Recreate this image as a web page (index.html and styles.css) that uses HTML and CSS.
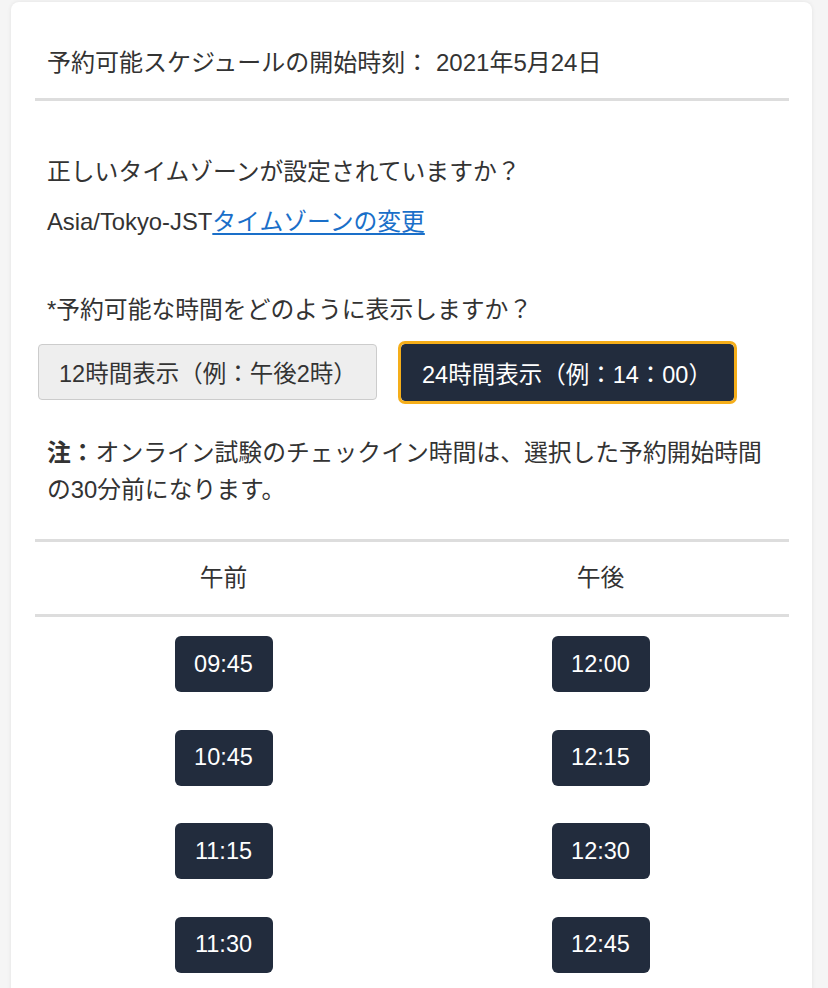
FILE: index.html
```html
<!DOCTYPE html>
<html lang="ja">
<head>
  <meta charset="UTF-8">
  <title>予約可能スケジュール</title>
  <link rel="stylesheet" href="styles.css">
</head>
<body>
  <div class="card">
    <div class="header">
      <p>予約可能スケジュールの開始時刻： 2021年5月24日</p>
    </div>

    <!-- タイムゾーン -->
    <div class="section">
      <p class="question">正しいタイムゾーンが設定されていますか？</p>
      <p class="tz">Asia/Tokyo-JST<a href="#">タイムゾーンの変更</a></p>
    </div>

    <!-- 時間表示 -->
    <div class="section format">
      <p class="question">*予約可能な時間をどのように表示しますか？</p>
      <div class="toggle">
        <button class="fmt">12時間表示（例：午後2時）</button>
        <button class="fmt active">24時間表示（例：14：00）</button>
      </div>
      <p class="note"><b>注：</b>オンライン試験のチェックイン時間は、選択した予約開始時間の30分前になります。</p>
    </div>

    <!-- 時間一覧 -->
    <div class="slots">
      <div class="slots-head">
        <div>午前</div>
        <div>午後</div>
      </div>
      <div class="slots-body">
        <div class="col">
          <button class="slot">09:45</button>
          <button class="slot">10:45</button>
          <button class="slot">11:15</button>
          <button class="slot">11:30</button>
        </div>
        <div class="col">
          <button class="slot">12:00</button>
          <button class="slot">12:15</button>
          <button class="slot">12:30</button>
          <button class="slot">12:45</button>
        </div>
      </div>
    </div>
  </div>
</body>
</html>
```

FILE: styles.css
```css
html, body {
  margin: 0;
  padding: 0;
  background-color: #f5f5f5;
  color: #333;
  font-family: "Liberation Sans", "Noto Sans CJK JP", sans-serif;
  font-size: 23.8px;
}

p {
  margin: 0;
}

.card {
  margin: 2px 16px 0 11px;
  padding: 0 23px 0 24px;
  background: #fff;
  border-radius: 8px;
  box-shadow: 0 0 4px rgba(0, 0, 0, 0.08);
  min-height: 1000px;
}

.header {
  padding: 43px 0 17px 12px;
  border-bottom: 3px solid #ddd;
  line-height: 36px;
  font-size: 24px;
}

.section {
  padding: 0 20px 0 12px;
  line-height: 36px;
}

.section .question {
  margin-top: 53px;
}

.tz {
  margin-top: 14px;
}

.tz a {
  color: #1a6fc9;
  text-decoration: underline;
  text-decoration-thickness: 2px;
  text-underline-offset: 3px;
}

.format .question {
  margin-top: 52px;
}

.toggle {
  display: flex;
  gap: 24px;
  margin: 16px 0 0 -9px;
}

.fmt {
  height: 56px;
  padding: 0 20px;
  font-family: inherit;
  font-size: 23.5px;
  text-align: left;
  border-radius: 4px;
  border: 1px solid #ccc;
  background-color: #eee;
  color: #333;
  cursor: pointer;
}

.fmt:first-child {
  width: 339px;
}

.fmt.active {
  width: 333px;
  height: 57px;
  border: 1px solid #222c3d;
  background-color: #222c3d;
  color: #fff;
  outline: 3px solid #f5ae1a;
  outline-offset: 0;
}

.note {
  margin-top: 33px;
  line-height: 37px;
}

.note b {
  margin-right: 1px;
}

.slots {
  margin-top: 31px;
  border-top: 3px solid #ddd;
}

.slots-head {
  display: grid;
  grid-template-columns: 1fr 1fr;
  text-align: center;
  line-height: 36px;
  padding: 18px 0 18px;
  border-bottom: 3px solid #ddd;
}

.slots-body {
  display: grid;
  grid-template-columns: 1fr 1fr;
  padding-top: 19px;
}

.col {
  display: flex;
  flex-direction: column;
  align-items: center;
  gap: 37.5px;
}

.slot {
  width: 98px;
  height: 56px;
  padding: 0;
  font-family: inherit;
  font-size: 23.5px;
  border: none;
  border-radius: 6px;
  background-color: #222c3d;
  color: #fff;
  cursor: pointer;
}
```
